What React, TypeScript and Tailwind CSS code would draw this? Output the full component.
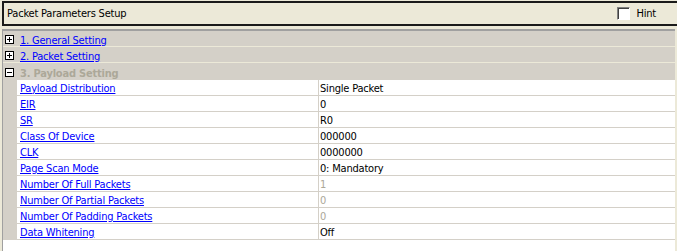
import { ReactNode } from "react";

type Row = { name: string; value: string; disabled?: boolean };

const rows: Row[] = [
  { name: "Payload Distribution", value: "Single Packet" },
  { name: "EIR", value: "0" },
  { name: "SR", value: "R0" },
  { name: "Class Of Device", value: "000000" },
  { name: "CLK", value: "0000000" },
  { name: "Page Scan Mode", value: "0: Mandatory" },
  { name: "Number Of Full Packets", value: "1", disabled: true },
  { name: "Number Of Partial Packets", value: "0", disabled: true },
  { name: "Number Of Padding Packets", value: "0", disabled: true },
  { name: "Data Whitening", value: "Off" },
];

function ExpandBox({ open }: { open: boolean }) {
  return (
    <svg width="9" height="9" viewBox="0 0 9 9" className="shrink-0">
      <rect x="0.5" y="0.5" width="8" height="8" fill="#fff" stroke="#000" />
      <line x1="2" y1="4.5" x2="7" y2="4.5" stroke="#000" />
      {!open && <line x1="4.5" y1="2" x2="4.5" y2="7" stroke="#000" />}
    </svg>
  );
}

function GroupRow({
  open,
  children,
  last,
}: {
  open: boolean;
  children: ReactNode;
  last?: boolean;
}) {
  return (
    <div
      className={
        "flex items-center gap-[6px] pl-[2px] pt-[2px] bg-[#D4D0C8] " +
        (last ? "h-[17px]" : "h-[16px] border-b border-[#ECE9D8]")
      }
    >
      <ExpandBox open={open} />
      <div className="pt-[1px]">{children}</div>
    </div>
  );
}

export default function App() {
  return (
    <div className="flex h-[251px] w-[677px] flex-col overflow-hidden bg-[#ECE9D8] font-['DejaVu_Sans','Liberation_Sans',sans-serif] text-[11px] leading-none tracking-[-0.2px] text-black [font-stretch:condensed]">
      {/* header bar */}
      <div className="ml-[2px] mt-[1px] flex h-[25px] w-[680px] shrink-0 items-center border-2 border-[#1a1a1a] pl-[3px]">
        <span>Packet Parameters Setup</span>
        <div className="ml-auto mr-[24px] flex items-center gap-[6px]">
          <span className="block h-[13px] w-[13px] border border-t-[#808080] border-l-[#808080] border-b-white border-r-white bg-white shadow-[inset_1px_1px_0_#404040]" />
          <span>Hint</span>
        </div>
      </div>

      {/* property grid */}
      <div className="ml-[2px] mr-[2px] mt-[3px] flex flex-1 flex-col border-l border-t-2 border-[#A0A0A0] bg-white">
        <GroupRow open={false}>
          <a className="text-[#0000FF] underline">1. General Setting</a>
        </GroupRow>
        <GroupRow open={false}>
          <a className="text-[#0000FF] underline">2. Packet Setting</a>
        </GroupRow>
        <GroupRow open last>
          <span className="font-bold text-[#ACA899]">3. Payload Setting</span>
        </GroupRow>

        <div className="flex flex-col">
          {rows.map((r) => (
            <div key={r.name} className="flex h-[16px]">
              <div className="w-[14px] shrink-0 bg-[#D4D0C8]" />
              <div className="flex w-[302px] shrink-0 items-center border-b border-r border-[#D4D0C8] pl-[3px] pt-[1px]">
                <a className="text-[#0000FF] underline">{r.name}</a>
              </div>
              <div
                className={
                  "flex flex-1 items-center border-b border-[#D4D0C8] pl-[1px] pt-[1px] " +
                  (r.disabled ? "text-[#ACA899]" : "text-black")
                }
              >
                {r.value}
              </div>
            </div>
          ))}
        </div>
      </div>
    </div>
  );
}
